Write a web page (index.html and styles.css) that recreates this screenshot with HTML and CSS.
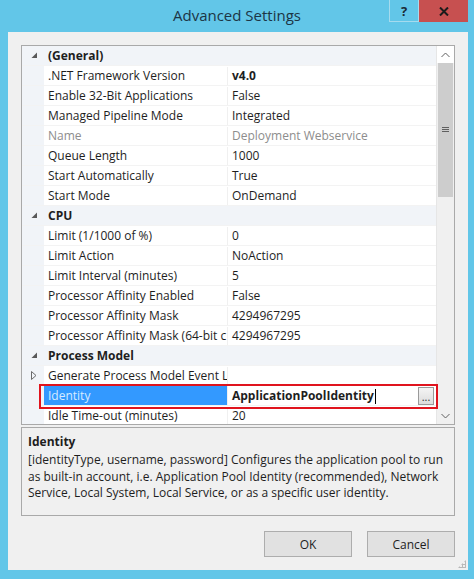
FILE: index.html
```html
<!DOCTYPE html>
<html lang="en">
<head>
    <meta charset="UTF-8">
    <title>Advanced Settings</title>
    <link rel="stylesheet" href="styles.css">
</head>
<body>
<div class="window">
    <div class="titlebar">
        <div class="title">Advanced Settings</div>
        <div class="caption-buttons">
            <div class="cap help">?</div>
            <div class="cap close">
                <svg width="10" height="9" viewBox="0 0 10 9"><path d="M1 0.5 L9 8.5 M9 0.5 L1 8.5" stroke="#1b1b1b" stroke-width="2"/></svg>
            </div>
        </div>
    </div>

    <div class="client">
        <div class="propgrid">
            <div class="rows">
                <div class="row cat"><span class="gut"><svg width="7" height="7" viewBox="0 0 7 7"><polygon points="6,0.5 6,6 0.5,6" fill="#595959"/></svg></span><span class="name">(General)</span><span class="value"></span></div>
                <div class="row"><span class="gut"></span><span class="name">.NET Framework Version</span><span class="value bold">v4.0</span></div>
                <div class="row"><span class="gut"></span><span class="name">Enable 32-Bit Applications</span><span class="value">False</span></div>
                <div class="row"><span class="gut"></span><span class="name">Managed Pipeline Mode</span><span class="value">Integrated</span></div>
                <div class="row dim"><span class="gut"></span><span class="name">Name</span><span class="value">Deployment Webservice</span></div>
                <div class="row"><span class="gut"></span><span class="name">Queue Length</span><span class="value">1000</span></div>
                <div class="row"><span class="gut"></span><span class="name">Start Automatically</span><span class="value">True</span></div>
                <div class="row"><span class="gut"></span><span class="name">Start Mode</span><span class="value">OnDemand</span></div>
                <div class="row cat"><span class="gut"><svg width="7" height="7" viewBox="0 0 7 7"><polygon points="6,0.5 6,6 0.5,6" fill="#595959"/></svg></span><span class="name">CPU</span><span class="value"></span></div>
                <div class="row"><span class="gut"></span><span class="name">Limit (1/1000 of %)</span><span class="value">0</span></div>
                <div class="row"><span class="gut"></span><span class="name">Limit Action</span><span class="value">NoAction</span></div>
                <div class="row"><span class="gut"></span><span class="name">Limit Interval (minutes)</span><span class="value">5</span></div>
                <div class="row"><span class="gut"></span><span class="name">Processor Affinity Enabled</span><span class="value">False</span></div>
                <div class="row"><span class="gut"></span><span class="name">Processor Affinity Mask</span><span class="value">4294967295</span></div>
                <div class="row"><span class="gut"></span><span class="name">Processor Affinity Mask (64-bit c</span><span class="value">4294967295</span></div>
                <div class="row cat"><span class="gut"><svg width="7" height="7" viewBox="0 0 7 7"><polygon points="6,0.5 6,6 0.5,6" fill="#595959"/></svg></span><span class="name">Process Model</span><span class="value"></span></div>
                <div class="row"><span class="gut"><svg width="6" height="9" viewBox="0 0 6 9"><polygon points="0.5,0.5 5,4.5 0.5,8.5" fill="none" stroke="#6b6b6b"/></svg></span><span class="name">Generate Process Model Event L</span><span class="value"></span></div>
                <div class="row selected"><span class="gut"></span><span class="name">Identity</span><span class="value bold">ApplicationPoolIdentity<span class="caret"></span><span class="dots">...</span></span></div>
                <div class="row"><span class="gut"></span><span class="name">Idle Time-out (minutes)</span><span class="value">20</span></div>
                <div class="highlight"></div>
            </div>
            <div class="scrollbar">
                <div class="arrow">
                    <svg width="9" height="6" viewBox="0 0 9 6"><polyline points="0.5,5 4.5,1 8.5,5" fill="none" stroke="#606060"/></svg>
                </div>
                <div class="thumb">
                    <svg width="7" height="6" viewBox="0 0 7 6"><path d="M0 0.5 H7 M0 2.5 H7 M0 4.5 H7" stroke="#606060"/></svg>
                </div>
                <div class="track"></div>
                <div class="arrow">
                    <svg width="9" height="6" viewBox="0 0 9 6"><polyline points="0.5,1 4.5,5 8.5,1" fill="none" stroke="#606060"/></svg>
                </div>
            </div>
        </div>

        <div class="description">
            <div class="desc-title">Identity</div>
            <p>[identityType, username, password] Configures the application pool to run as built-in account, i.e. Application Pool Identity (recommended), Network Service, Local System, Local Service, or as a specific user identity.</p>
        </div>

        <div class="buttons">
            <button class="btn">OK</button>
            <button class="btn">Cancel</button>
        </div>
        <div class="grip"></div>
    </div>
</div>
</body>
</html>
```

FILE: styles.css
```css
body {
    margin: 0;
    background: #62c6e8;
    font-family: "Open Sans", "Noto Sans", sans-serif;
    font-size: 12px;
    color: #1e1e1e;
}
.window {
    width: 474px;
    height: 579px;
    display: flex;
    flex-direction: column;
}
.titlebar {
    height: 32px;
    position: relative;
    display: flex;
    justify-content: center;
}
.title {
    font-size: 15px;
    color: #1c3545;
    line-height: 30px;
}
.caption-buttons {
    position: absolute;
    top: 0;
    right: 6px;
    display: flex;
}
.cap {
    height: 21px;
    display: flex;
    align-items: center;
    justify-content: center;
}
.help {
    width: 28px;
    border: 1px solid #a5dbee;
    border-top: none;
    font-weight: bold;
    font-size: 13px;
    color: #1a2a35;
}
.close {
    width: 49px;
    height: 22px;
    background: #c75050;
}
.client {
    flex: 1;
    margin: 0 6px 9px 8px;
    background: #f0f0f0;
    padding: 13px 13px 0 13px;
    position: relative;
}

/* property grid */
.propgrid {
    height: 378px;
    border: 1px solid #a9a9a9;
    background: #fff;
    display: flex;
    overflow: hidden;
}
.rows {
    flex: 1;
    position: relative;
}
.row {
    display: flex;
    height: 20px;
    padding-top: 1px;
    line-height: 18px;
    border-bottom: 1px solid #f3f3f3;
    box-sizing: border-box;
    white-space: nowrap;
}
.gut {
    width: 22px;
    margin-top: -1px;
    background: #f1f4f8;
    display: flex;
    align-items: center;
    justify-content: center;
    padding-left: 2px;
    box-sizing: border-box;
}
.name {
    width: 184px;
    padding-left: 4px;
    box-sizing: border-box;
    border-right: 1px solid #f0f0f0;
    overflow: hidden;
}
.value {
    flex: 1;
    padding-left: 4px;
    position: relative;
    display: flex;
    align-items: center;
}
.bold { font-weight: bold; }
.dim { color: #8d8d8d; }
.row.cat {
    background: #f1f4f8;
    font-weight: bold;
}
.row.cat .name { border-right: none; }
.row.selected .name {
    margin-top: -1px;
    padding-top: 1px;
    background: #3399ff;
    color: #d7ebff;
}
.caret {
    display: inline-block;
    width: 1px;
    height: 15px;
    background: #000;
    margin-left: 1px;
}
.dots {
    position: absolute;
    right: 2px;
    top: 0;
    width: 14px;
    height: 16px;
    border: 1px solid #9a9a9a;
    background: linear-gradient(#f4f4f4, #dcdcdc);
    font-weight: normal;
    font-size: 11px;
    line-height: 18px;
    text-align: center;
    color: #333;
}
.highlight {
    position: absolute;
    left: 17px;
    top: 338px;
    width: 395px;
    height: 21px;
    border: 2px solid #e0141e;
}

/* scrollbar */
.scrollbar {
    width: 17px;
    background: #f0f0f0;
    border-left: 1px solid #e6e6e6;
    display: flex;
    flex-direction: column;
}
.arrow {
    height: 17px;
    display: flex;
    align-items: center;
    justify-content: center;
    background: #f0f0f0;
}
.arrow:first-child { background: #fff; }
.thumb {
    height: 134px;
    margin: 0 1px;
    background: #cdcdcd;
    display: flex;
    align-items: center;
    justify-content: center;
}
.track { flex: 1; }

/* description */
.description {
    margin-top: 2px;
    height: 89px;
    border: 1px solid #a9a9a9;
    box-sizing: border-box;
    padding: 5px 6px 3px;
}
.desc-title {
    font-weight: bold;
    line-height: 17px;
}
.description p {
    margin: 2px 0 0;
    line-height: 16.5px;
}

/* buttons */
.buttons {
    display: flex;
    justify-content: flex-end;
    gap: 15px;
    margin-top: 15px;
}
.btn {
    width: 88px;
    height: 26px;
    font-family: "Open Sans", "Noto Sans", sans-serif;
    font-size: 12px;
    color: #1e1e1e;
    background: #e1e1e1;
    border: 1px solid #adadad;
}
.grip {
    position: absolute;
    right: 2px;
    bottom: 2px;
    width: 8px;
    height: 8px;
    background: radial-gradient(circle, #b8b8b8 1px, transparent 1.2px) 0 0 / 3px 3px;
    clip-path: polygon(100% 0, 100% 100%, 0 100%);
}
```
